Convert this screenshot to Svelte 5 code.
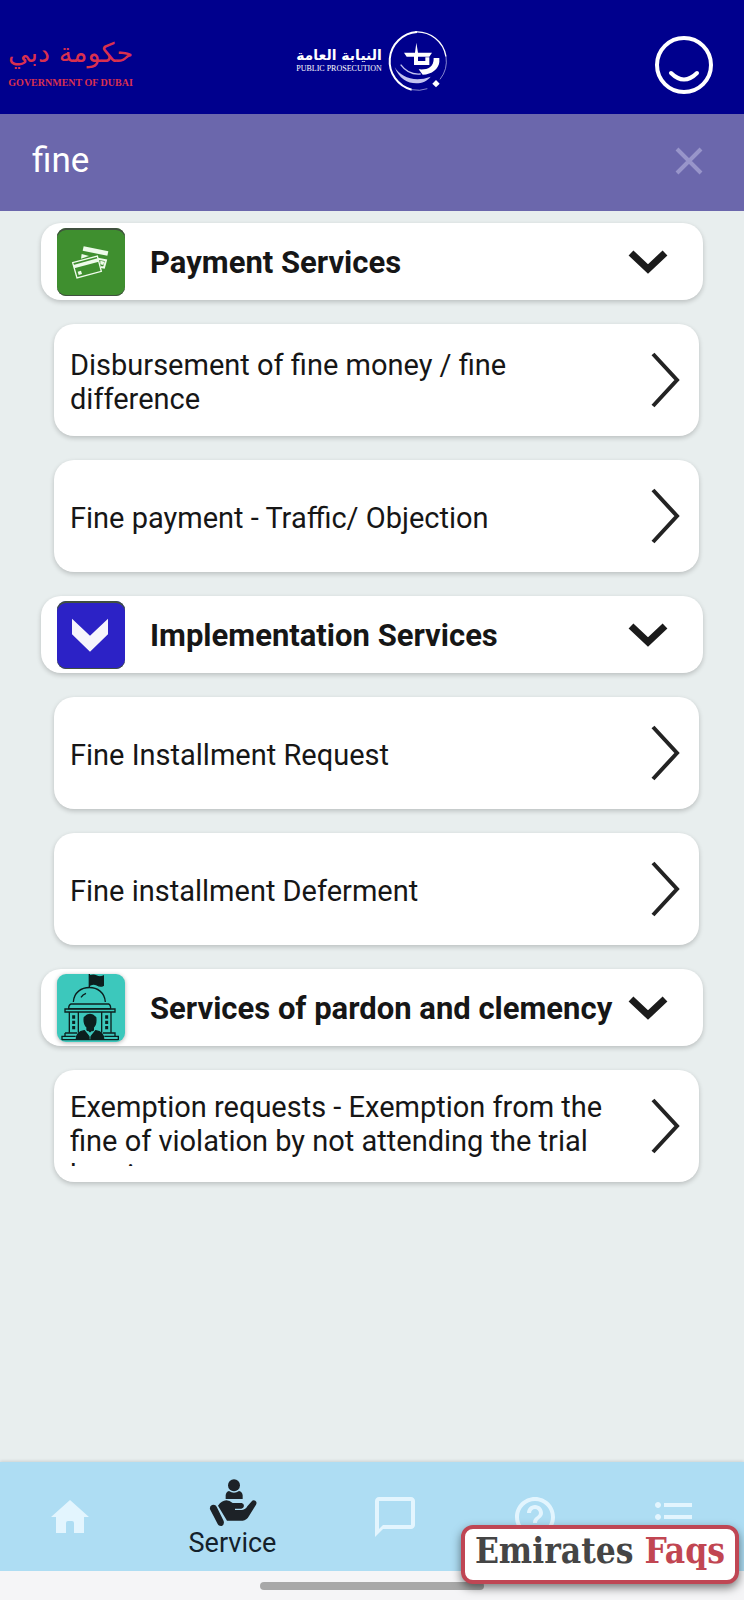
<script lang="ts">
	interface Service {
		id: string;
		title: string;
		icon: 'payment' | 'implementation' | 'pardon';
		items: string[];
	}

	const groups: Service[] = [
		{
			id: 'payment',
			title: 'Payment Services',
			icon: 'payment',
			items: ['Disbursement of fine money / fine difference', 'Fine payment - Traffic/ Objection']
		},
		{
			id: 'implementation',
			title: 'Implementation Services',
			icon: 'implementation',
			items: ['Fine Installment Request', 'Fine installment Deferment']
		},
		{
			id: 'pardon',
			title: 'Services of pardon and clemency',
			icon: 'pardon',
			items: [
				'Exemption requests - Exemption from the fine of violation by not attending the trial hearing'
			]
		}
	];

	let query = $state('fine');
	let closed: Record<string, boolean> = $state({});

	function toggle(id: string) {
		closed[id] = !closed[id];
	}
</script>

<div class="app">
	<header class="top-bar">
		<div class="gov-logo">
			<span class="gov-ar" lang="ar" dir="rtl">حكومة دبي</span>
			<span class="gov-en">GOVERNMENT OF DUBAI</span>
		</div>

		<div class="pp-logo">
			<div class="pp-text">
				<span class="pp-ar" lang="ar" dir="rtl">النيابة العامة</span>
				<span class="pp-en">PUBLIC PROSECUTION</span>
			</div>
			<svg width="62" height="62" viewBox="8 8 186 186" fill="none" aria-hidden="true">
				<path d="M85 187A88 88 0 0 1 101 14" stroke="#fff" stroke-width="6" />
				<path d="M95 14A88 88 0 0 1 188 88" stroke="#fff" stroke-width="4" />
				<path d="M188 88A88 88 0 0 1 170 156" stroke="#c8c8f0" stroke-width="2" />
				<path d="M85 187A88 88 0 0 0 132 184" stroke="#c8c8f0" stroke-width="2" />
				<path d="M34 119C52 150 94 166 142 148C118 180 54 176 34 119Z" fill="#c3c3f0" />
				<path d="M52 112C68 134 92 142 112 140" stroke="#c3c3f0" stroke-width="4" />
				<path d="M99 46L104 76H146L138 88H104V101H126V90H138V113H92V88H70L62 76H95Z" fill="#fff" />
				<path d="M151 92H168V104C166 124 146 142 118 142L106 126C130 128 152 122 151 92Z" fill="#fff" />
				<path d="M158 158L169 169L158 180L147 169Z" fill="#fff" />
			</svg>
		</div>

		<button class="smiley" aria-label="Happiness meter">
			<svg width="60" height="60" viewBox="0 0 60 60" fill="none" stroke="#fff" stroke-linecap="round">
				<circle cx="30" cy="30" r="27" stroke-width="4" />
				<path d="M17 38Q30 51 43 38" stroke-width="4" />
			</svg>
		</button>
	</header>

	<div class="search">
		<input type="text" aria-label="Search services" bind:value={query} />
		<button class="clear" aria-label="Clear search" onclick={() => (query = '')}>
			<svg width="28" height="28" viewBox="0 0 28 28" stroke="#9895ca" stroke-width="4">
				<path d="M2 2L26 26M26 2L2 26" />
			</svg>
		</button>
	</div>

	<main class="list">
		{#each groups as group (group.id)}
			<button class="group" aria-expanded={!closed[group.id]} onclick={() => toggle(group.id)}>
				<span class="tile {group.icon}">
					{#if group.icon === 'payment'}
						<svg width="68" height="68" viewBox="0 0 204 204" fill="none">
							<path d="M80 55L154 70L151 83L77 68Z" fill="#eefbea" />
							<path d="M74 78L96 84L72 92Z" fill="#eefbea" />
							<path d="M122 92L147 97L141 119L132 117" stroke="#eefbea" stroke-width="6" />
							<path d="M130 98L142 101L139 111L130 109Z" fill="#eefbea" />
							<path d="M47 104L121 84L133 130L60 150Z" fill="#3f8f2f" stroke="#eefbea" stroke-width="4" />
							<path d="M49 111L122 91L125 101L52 121Z" fill="#eefbea" />
							<path d="M62 131L72 128L75 138L65 141Z" fill="#eefbea" />
						</svg>
					{:else if group.icon === 'implementation'}
						<svg width="68" height="68" viewBox="0 0 204 204">
							<path d="M45 53L99 104L153 53V100L99 152L45 100Z" fill="#f6f5fc" />
						</svg>
					{:else}
						<svg width="68" height="68" viewBox="0 0 204 204" fill="none" stroke="#0c1f1e" stroke-width="4">
							<path d="M97 0V42" />
							<path d="M100 5Q110 1 119 6T139 6V34Q130 39 120 33T100 33Z" fill="#0c1f1e" />
							<path d="M49 84C52 26 142 26 145 84" />
							<path d="M72 70Q77 62 87 58" />
							<path d="M42 90H155Q161 92 161 104H35Q35 92 42 90Z" />
							<path d="M24 105H174V114H24ZM37 115V176M64 115V176M134 115V176M162 115V176" />
							<path d="M24 177H60M138 177H174V187H184V198M24 177V187H15V198M15 197H184M24 187H56M142 187H174" />
							<path d="M50 124V134M50 140V150M50 156V166M149 124V134M149 140V150M149 156V166" stroke-width="9" />
							<path d="M82 130Q99 112 116 130Q119 150 109 160V168L99 174L90 168V160Q79 150 82 130Z" fill="#0c1f1e" />
							<path d="M58 196Q58 174 82 170L99 192L116 170Q140 174 140 196Z" fill="#0c1f1e" />
							<path d="M92 172L99 180L106 172" stroke="#3cc8bc" />
							<path d="M99 182V196" stroke="#3cc8bc" stroke-width="2" />
						</svg>
					{/if}
				</span>
				<span class="group-title">{group.title}</span>
				<svg width="40" height="26" viewBox="0 0 40 26" fill="none" stroke="#1b1b1b" stroke-width="7">
					<path d="M3 4L20 20L37 4" />
				</svg>
			</button>

			{#if !closed[group.id]}
				{#each group.items as item}
					<button class="item">
						<span class="item-text">{item}</span>
						<svg width="30" height="56" viewBox="0 0 30 56" fill="none" stroke="#232323" stroke-width="4">
							<path d="M2 2L26 28L2 54" />
						</svg>
					</button>
				{/each}
			{/if}
		{/each}
	</main>

	<footer>
		<nav class="tabs">
			<a href="#home" aria-label="Home">
				<svg width="48" height="48" viewBox="0 0 24 24" fill="#e3f5fe">
					<path d="M12 3.5L21.5 12H19V20H14V15Q14 14 13 14H11Q10 14 10 15V20H5V12H2.5Z" />
				</svg>
			</a>
			<a href="#service" class="active" aria-current="page">
				<svg width="48" height="48" viewBox="0 0 144 144" fill="#1d2227">
					<circle cx="75" cy="19" r="18" />
					<path d="M50 60V49Q51 38 60 36Q75 46 90 36Q100 38 101 49V60Z" />
					<path d="M27 80Q38 65 52 64Q62 64 71 72H98Q105 73 105 81Q104 88 97 89H78V93H99Q110 92 115 82L127 68Q132 62 139 65Q145 69 141 77L120 111Q113 124 101 125H54Z" />
					<path d="M9 78Q19 75 23 83L44 126Q47 137 38 141Q29 142 26 135L3 91Q1 82 9 78Z" />
				</svg>
				<span>Service</span>
			</a>
			<a href="#chat" aria-label="Messages">
				<svg width="48" height="48" viewBox="0 0 24 24" fill="#e3f5fe">
					<path d="M20 2H4c-1.1 0-2 .9-2 2v18l4-4h14c1.1 0 2-.9 2-2V4c0-1.1-.9-2-2-2zm0 14H6l-2 2V4h16v12z" />
				</svg>
			</a>
			<a href="#help" aria-label="Help">
				<svg width="48" height="48" viewBox="0 0 24 24" fill="#e3f5fe">
					<path d="M11 18h2v-2h-2v2zm1-16C6.48 2 2 6.48 2 12s4.48 10 10 10 10-4.48 10-10S17.52 2 12 2zm0 18c-4.41 0-8-3.59-8-8s3.59-8 8-8 8 3.59 8 8-3.59 8-8 8zm0-14c-2.21 0-4 1.79-4 4h2c0-1.1.9-2 2-2s2 .9 2 2c0 2-3 1.75-3 5h2c0-2.25 3-2.5 3-5 0-2.21-1.79-4-4-4z" />
				</svg>
			</a>
			<a href="#menu" aria-label="Menu">
				<svg width="48" height="48" viewBox="0 0 24 24" fill="#e3f5fe">
					<path d="M4 10.5c-.83 0-1.5.67-1.5 1.5s.67 1.5 1.5 1.5 1.5-.67 1.5-1.5-.67-1.5-1.5-1.5zm0-6c-.83 0-1.5.67-1.5 1.5S3.17 7.5 4 7.5 5.5 6.83 5.5 6 4.83 4.5 4 4.5zm0 12c-.83 0-1.5.68-1.5 1.5s.68 1.5 1.5 1.5 1.5-.68 1.5-1.5-.67-1.5-1.5-1.5zM7 19h14v-2H7v2zm0-6h14v-2H7v2zm0-8v2h14V5H7z" />
				</svg>
			</a>
		</nav>
		<div class="gesture"><span></span></div>
		<div class="badge">Emirates <span>Faqs</span></div>
	</footer>
</div>

<style>
	:global(body) {
		margin: 0;
		background: #e8eeee;
	}

	.app {
		min-height: 100vh;
		display: flex;
		flex-direction: column;
		font-family: Roboto, 'Liberation Sans', sans-serif;
		color: #161616;
	}

	svg {
		display: block;
		flex: none;
	}

	button {
		font: inherit;
		color: inherit;
		border: none;
		background: none;
		padding: 0;
		text-align: left;
		cursor: pointer;
	}

	.top-bar {
		display: grid;
		grid-template-columns: 1fr auto 1fr;
		align-items: center;
		height: 114px;
		padding: 8px 8px 0;
		box-sizing: border-box;
		background: #00008d;
	}

	.gov-logo {
		display: flex;
		flex-direction: column;
		align-items: center;
		justify-self: start;
		color: #d9304f;
	}

	.gov-ar {
		font: 27px/44px 'DejaVu Sans', sans-serif;
	}

	.gov-en {
		font: bold 10px/16px 'Liberation Serif', serif;
	}

	.pp-logo {
		display: flex;
		align-items: center;
		gap: 4px;
		color: #fff;
	}

	.pp-text {
		display: flex;
		flex-direction: column;
		align-items: center;
	}

	.pp-ar {
		font: bold 14px/16px 'DejaVu Sans', sans-serif;
	}

	.pp-en {
		font: 8px/12px 'Liberation Serif', serif;
	}

	.smiley {
		justify-self: end;
		padding: 8px 22px 0 0;
	}

	.search {
		display: flex;
		align-items: center;
		height: 97px;
		padding: 0 41px 4px 32px;
		box-sizing: border-box;
		background: #6b67ac;
	}

	.search input {
		flex: 1;
		min-width: 0;
		padding: 0;
		border: none;
		outline: none;
		background: none;
		color: #fff;
		font: 35px/40px Roboto, sans-serif;
	}

	.list {
		flex: 1;
		display: flex;
		flex-direction: column;
		gap: 24px;
		padding: 12px 41px 24px;
	}

	.group,
	.item {
		display: flex;
		align-items: center;
		background: #fff;
		border-radius: 20px;
		box-shadow: 0 2px 5px rgba(0, 0, 0, 0.2);
	}

	.group {
		min-height: 77px;
		padding: 0 35px 0 16px;
	}

	.tile {
		width: 68px;
		height: 68px;
		border-radius: 9px;
		overflow: hidden;
		box-shadow: 0 1px 4px rgba(0, 0, 0, 0.3);
	}

	.tile.payment {
		background: #3f8f2f;
	}

	.tile.implementation {
		background: #2c22c6;
	}

	.tile.payment,
	.tile.implementation {
		box-shadow:
			inset 0 2px #40503f,
			inset 0 -1px #40503f;
	}

	.tile.pardon {
		background: #3cc8bc;
	}

	.group-title {
		flex: 1;
		padding: 2px 0 0 25px;
		font-size: 31px;
		line-height: 36px;
		font-weight: 700;
	}

	.item {
		min-height: 112px;
		margin: 0 4px 0 13px;
		padding: 0 18px 0 16px;
		box-sizing: border-box;
	}

	/* long names are clipped to the card */
	.item-text {
		flex: 1;
		max-height: 76px;
		overflow: hidden;
		margin-top: 4px;
		padding-right: 40px;
		font-size: 29px;
		line-height: 34px;
	}

	footer {
		position: relative;
	}

	.tabs {
		display: flex;
		height: 109px;
		background: #aeddf3;
		box-shadow: 0 -1px 3px rgba(0, 0, 0, 0.12);
	}

	.tabs a {
		flex: 3;
		display: flex;
		flex-direction: column;
		align-items: center;
		justify-content: center;
		color: #14212b;
		font-size: 27px;
		line-height: 32px;
		text-decoration: none;
	}

	.tabs .active {
		flex: 4;
		padding-top: 4px;
	}

	.gesture {
		display: flex;
		align-items: center;
		justify-content: center;
		height: 29px;
		background: #f5f5f7;
	}

	.gesture span {
		width: 30%;
		height: 8px;
		border-radius: 4px;
		background: #a8a8a8;
	}

	.badge {
		position: absolute;
		right: 5px;
		bottom: 16px;
		padding: 0 10px 7px;
		border: 4px solid #bf4654;
		border-radius: 12px;
		background: #fff;
		box-shadow: 0 4px 10px rgba(0, 0, 0, 0.5);
		color: #454545;
		font: bold 35px/44px 'DejaVu Serif Condensed', 'DejaVu Serif', serif;
	}

	.badge span {
		color: #c14652;
	}
</style>
